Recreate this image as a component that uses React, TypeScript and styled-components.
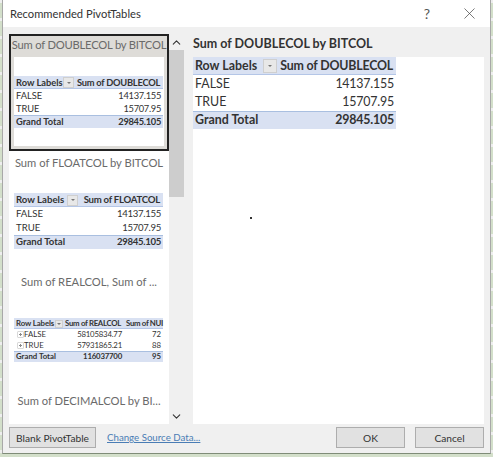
import React from 'react';
import styled, { createGlobalStyle } from 'styled-components';
import { ChevronUp, ChevronDown, X } from 'lucide-react';

const GlobalStyle = createGlobalStyle`
  html, body {
    margin: 0;
    padding: 0;
    background: #ffffff;
  }
`;

const Stage = styled.div`
  width: 493px;
  height: 457px;
  overflow: hidden;
  box-sizing: border-box;
  padding: 0 2px 3px 2px;
  background-color: #d3dfca;
  background-image: linear-gradient(to bottom, #eeeeee 3px, transparent 3px);
  background-size: 100% 18px;
`;

const Dialog = styled.div`
  height: 454px;
  display: flex;
  flex-direction: column;
  background: #f0f0f0;
  border-left: 1px solid #a8a8a8;
  border-right: 1px solid #a8a8a8;
  border-bottom: 1px solid #7f8c78;
  box-sizing: border-box;
`;

const TitleBar = styled.div`
  height: 27px;
  flex: none;
  display: flex;
  align-items: center;
  padding: 0 11px 0 7px;
  background: #ffffff;
  font: 11.2px Lato, sans-serif;
  color: #333333;
`;

const Title = styled.span`
  flex: 1;
`;

const HelpButton = styled.span`
  width: 14px;
  margin-right: 26px;
  text-align: center;
  font-size: 14px;
  color: #555555;
`;

const Body = styled.div`
  flex: 1;
  min-height: 0;
  display: flex;
  padding: 7px 6px 0 6px;
`;

const List = styled.div`
  width: 160px;
  height: 390px;
  overflow: hidden;
  background: #ffffff;
  flex: none;
`;

const Card = styled.div<{ $selected?: boolean; $height: number }>`
  height: ${p => p.$height}px;
  box-sizing: border-box;
  padding: ${p => (p.$selected ? '0 3px 3px' : '0 5px')};
  border: ${p => (p.$selected ? '2px solid #222222' : '0')};
  background: ${p => (p.$selected ? '#dedcd8' : '#ffffff')};
  display: flex;
  flex-direction: column;
`;

const CardTitle = styled.div<{ $height: number }>`
  height: ${p => p.$height}px;
  flex: none;
  text-align: center;
  white-space: nowrap;
  font: 11.2px Lato, sans-serif;
  line-height: ${p => p.$height}px;
  color: #6a6a6a;
`;

const SelectedTitle = styled(CardTitle)`
  margin: 0 -3px;
  letter-spacing: -0.2px;
`;

const CardBody = styled.div<{ $top: number }>`
  flex: 1;
  padding-top: ${p => p.$top}px;
  background: #ffffff;
`;

const SelectedBody = styled(CardBody)`
  margin-top: 4px;
`;

const Scrollbar = styled.div`
  width: 15px;
  height: 390px;
  flex: none;
  display: flex;
  flex-direction: column;
  align-items: center;
  color: #333333;
`;

const ScrollArrow = styled.div`
  height: 16px;
  flex: none;
  display: flex;
  align-items: center;
  justify-content: center;
`;

const ScrollTrack = styled.div`
  flex: 1;
  width: 100%;
`;

const ScrollThumb = styled.div`
  height: 147px;
  background: #cdcdcd;
`;

const Preview = styled.div`
  flex: 1;
  margin-left: 9px;
  display: flex;
  flex-direction: column;
  height: 390px;
`;

const PreviewTitle = styled.div`
  height: 23px;
  box-sizing: border-box;
  padding-bottom: 4px;
  flex: none;
  display: flex;
  align-items: center;
  font: bold 12.5px Lato, sans-serif;
  color: #333333;
`;

const PreviewPane = styled.div`
  flex: 1;
  background: #ffffff;
  position: relative;
`;

const Dot = styled.span`
  position: absolute;
  left: 57px;
  top: 160px;
  width: 2px;
  height: 2px;
  background: #333333;
`;

const Table = styled.div<{ $columns: string; $size: number; $rowHeight: number; $width: number }>`
  display: grid;
  width: ${p => p.$width}px;
  grid-template-columns: ${p => p.$columns};
  grid-auto-rows: ${p => p.$rowHeight}px;
  font: ${p => p.$size}px/${p => p.$rowHeight}px Lato, sans-serif;
  color: #333333;
`;

const Cell = styled.div<{ $kind?: 'head' | 'total'; $right?: boolean; $tight?: number }>`
  white-space: nowrap;
  display: flex;
  align-items: center;
  justify-content: ${p => (p.$right ? 'flex-end' : 'flex-start')};
  padding: 0 ${p => (p.$kind === 'head' && p.$right ? 3 : 2)}px 0 2px;
  min-width: 0;
  letter-spacing: ${p => p.$tight ?? 0}px;
  font-weight: ${p => (p.$kind ? 'bold' : 'normal')};
  background: ${p => (p.$kind ? '#d9e1f2' : '#ffffff')};
  box-shadow: ${p => (p.$kind === 'total' ? 'inset 0 1px 0 #a9bfe0' : p.$kind === 'head' ? 'inset 0 -1px 0 #b4c6e7' : 'none')};
`;

const FilterButton = styled.span<{ $size: number }>`
  width: ${p => p.$size}px;
  height: ${p => p.$size}px;
  margin-left: auto;
  flex: none;
  background: #e8e8e8;
  border: 1px solid #cfcfcf;
  box-sizing: border-box;
  display: flex;
  align-items: center;
  justify-content: center;
  &::after {
    content: '';
    border-left: 2px solid transparent;
    border-right: 2px solid transparent;
    border-top: 2px solid #777777;
  }
`;

const Expander = styled.span`
  width: 5px;
  height: 5px;
  margin: 0 1px 0 2px;
  flex: none;
  background:
    linear-gradient(#8a8a8a, #8a8a8a) center / 3px 1px no-repeat,
    linear-gradient(#8a8a8a, #8a8a8a) center / 1px 3px no-repeat;
  box-shadow: 0 0 0 0.5px #b0b0b0;
`;

const FooterBar = styled.div`
  height: 26px;
  flex: none;
  display: flex;
  align-items: flex-start;
  padding: 1px 6px 0 6px;
  font: 10.2px Lato, sans-serif;
  color: #333333;
`;

const Button = styled.button<{ $width: number; $gap?: number }>`
  width: ${p => p.$width}px;
  height: 21px;
  margin-left: ${p => p.$gap ?? 0}px;
  padding: 0;
  white-space: nowrap;
  background: #e1e1e1;
  border: 1px solid #adadad;
  font: inherit;
  color: inherit;
`;

const SourceLink = styled.a`
  margin-left: 11px;
  margin-right: auto;
  font-size: 9.7px;
  line-height: 21px;
  color: #4a7db5;
  text-decoration: underline;
`;

type Row = { label: string; value: string };

const rows: Row[] = [
  { label: 'FALSE', value: '14137.155' },
  { label: 'TRUE', value: '15707.95' },
];

const SimpleTable: React.FC<{
  column: string;
  columns: string;
  size: number;
  rowHeight: number;
  width: number;
  filter: number;
  tight: number;
  valueTight: number;
}> = ({ column, columns, size, rowHeight, width, filter, tight, valueTight }) => (
  <Table $columns={columns} $size={size} $rowHeight={rowHeight} $width={width}>
    <Cell $kind="head">Row Labels<FilterButton $size={filter} /></Cell>
    <Cell $kind="head" $right $tight={tight}>{column}</Cell>
    {rows.map(r => (
      <React.Fragment key={r.label}>
        <Cell>{r.label}</Cell>
        <Cell $right $tight={valueTight}>{r.value}</Cell>
      </React.Fragment>
    ))}
    <Cell $kind="total">Grand Total</Cell>
    <Cell $kind="total" $right $tight={valueTight}>29845.105</Cell>
  </Table>
);

const App: React.FC = () => (
  <Stage>
    <GlobalStyle />
    <Dialog>
      <TitleBar>
        <Title>Recommended PivotTables</Title>
        <HelpButton>?</HelpButton>
        <X size={19} strokeWidth={0.9} color="#444444" />
      </TitleBar>
      <Body>
        <List>
          <Card $selected $height={117}>
            <SelectedTitle $height={17}>Sum of DOUBLECOL by BITCOL</SelectedTitle>
            <SelectedBody $top={19}>
              <SimpleTable column="Sum of DOUBLECOL" columns="62px 87px" size={9.3} rowHeight={13} width={149} filter={11} tight={-0.25} valueTight={-0.3} />
            </SelectedBody>
          </Card>
          <Card $height={119}>
            <CardTitle $height={23}>Sum of FLOATCOL by BITCOL</CardTitle>
            <CardBody $top={19}>
              <SimpleTable column="Sum of FLOATCOL" columns="66px 83px" size={9.6} rowHeight={14} width={149} filter={11} tight={-0.25} valueTight={-0.3} />
            </CardBody>
          </Card>
          <Card $height={119}>
            <CardTitle $height={24}>Sum of REALCOL, Sum of ...</CardTitle>
            <CardBody $top={24}>
              <Table $columns="51px 59px 39px" $size={7.8} $rowHeight={11} $width={149}>
                <Cell $kind="head" $tight={-0.1}>Row Labels<FilterButton $size={8} /></Cell>
                <Cell $kind="head" $right $tight={-0.3}>Sum of REALCOL</Cell>
                <Cell $kind="head" $tight={-0.3}>Sum of NUI</Cell>
                <Cell><Expander />FALSE</Cell>
                <Cell $right $tight={-0.2}>58105834.77</Cell>
                <Cell $right>72</Cell>
                <Cell><Expander />TRUE</Cell>
                <Cell $right $tight={-0.2}>57931865.21</Cell>
                <Cell $right>88</Cell>
                <Cell $kind="total">Grand Total</Cell>
                <Cell $kind="total" $right $tight={-0.2}>116037700</Cell>
                <Cell $kind="total" $right>95</Cell>
              </Table>
            </CardBody>
          </Card>
          <Card $height={35}>
            <CardTitle $height={23}>Sum of DECIMALCOL by BI...</CardTitle>
          </Card>
        </List>
        <Scrollbar>
          <ScrollArrow><ChevronUp size={13} strokeWidth={2} /></ScrollArrow>
          <ScrollTrack><ScrollThumb /></ScrollTrack>
          <ScrollArrow><ChevronDown size={13} strokeWidth={2} /></ScrollArrow>
        </Scrollbar>
        <Preview>
          <PreviewTitle>Sum of DOUBLECOL by BITCOL</PreviewTitle>
          <PreviewPane>
            <SimpleTable column="Sum of DOUBLECOL" columns="86px 117px" size={12.4} rowHeight={18} width={203} filter={14} tight={-0.2} valueTight={-0.2} />
            <Dot />
          </PreviewPane>
        </Preview>
      </Body>
      <FooterBar>
        <Button $width={87}>Blank PivotTable</Button>
        <SourceLink>Change Source Data...</SourceLink>
        <Button $width={69}>OK</Button>
        <Button $width={69} $gap={10}>Cancel</Button>
      </FooterBar>
    </Dialog>
  </Stage>
);

export default App;
